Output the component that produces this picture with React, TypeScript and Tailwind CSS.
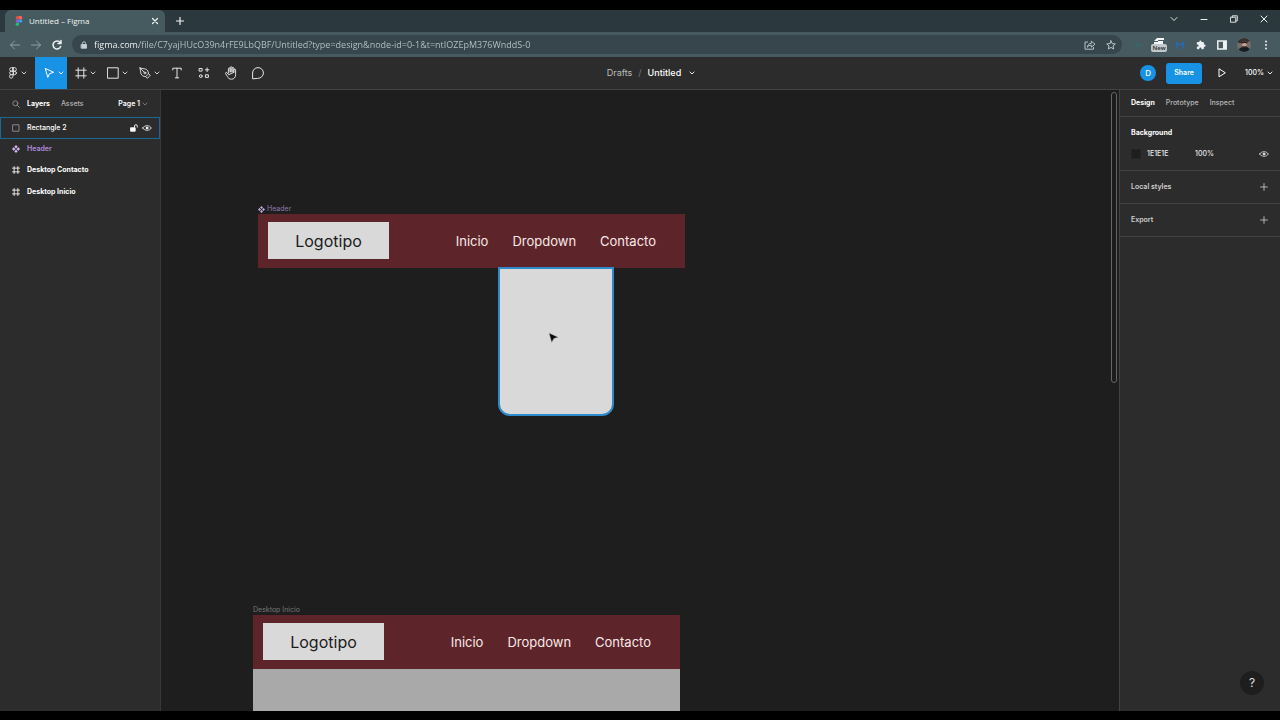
import type { ReactNode } from "react";

type IconProps = { className?: string };
type SvgProps = IconProps & { box?: string; sw?: number; children: ReactNode };

function Svg({ className = "size-4", box = "0 0 16 16", sw = 1, children }: SvgProps) {
  return (
    <svg
      className={`shrink-0 ${className}`}
      viewBox={box}
      fill="none"
      stroke="currentColor"
      strokeWidth={sw}
      strokeLinecap="round"
      strokeLinejoin="round"
      aria-hidden="true"
    >
      {children}
    </svg>
  );
}

function Chevron({ className = "h-1 w-1.5" }: IconProps) {
  return (
    <Svg className={className} box="0 0 6 4" sw={0.9}>
      <path d="M1 1l2 2 2-2" />
    </Svg>
  );
}

function FigmaColorIcon() {
  return (
    <svg className="h-2.5 w-2 shrink-0" viewBox="0 0 8 12" aria-hidden="true">
      <path d="M2 0h2v4H2a2 2 0 010-4z" fill="#e0533a" />
      <path d="M4 0h2a2 2 0 010 4H4z" fill="#f0685c" />
      <path d="M2 4h2v4H2a2 2 0 010-4z" fill="#8d5bd6" />
      <circle cx="6" cy="6" r="2" fill="#2fa8e8" />
      <path d="M2 8h2v2a2 2 0 11-2-2z" fill="#20bd78" />
    </svg>
  );
}

function FigmaOutlineIcon() {
  return (
    <Svg className="h-3 w-2" box="0 0 8 12" sw={0.9}>
      <path d="M4 .7H2.4a1.75 1.75 0 000 3.5H4zM4 .7h1.6a1.75 1.75 0 010 3.5H4zM4 4.2H2.4a1.75 1.75 0 000 3.5H4zM4 7.7H2.4A1.75 1.75 0 104 9.5z" />
      <circle cx="5.7" cy="5.95" r="1.7" />
    </Svg>
  );
}

function MoveIcon() {
  return (
    <Svg className="size-3" box="0 0 12 12">
      <path d="M2.3 1.8l2.5 8.6 1.7-3.7 3.8-1.3z" />
    </Svg>
  );
}

function HashIcon({ className = "size-3" }: IconProps) {
  return (
    <Svg className={className} box="0 0 12 12">
      <path d="M3.2.8v10.4M8.8.8v10.4M.8 3.2h10.4M.8 8.8h10.4" />
    </Svg>
  );
}

function SquareIcon() {
  return (
    <Svg className="size-3" box="0 0 12 12">
      <rect x=".8" y=".8" width="10.4" height="10.4" />
    </Svg>
  );
}

function PenIcon() {
  return (
    <Svg className="size-3" box="0 0 12 12" sw={0.9}>
      <path d="M1 1l5.6 1.1c1.8.6 3 2.4 2.8 4.8L6.8 9.5C4.4 9.7 2.6 8.5 2 6.7L1 1zM1 1l4.3 4.3M9.7 6.8l1.6 1.5-3 3-1.5-1.6" />
      <circle cx="5.9" cy="5.9" r="1" />
    </Svg>
  );
}

function TextIcon() {
  return (
    <Svg className="size-3" box="0 0 12 12">
      <path d="M1.8 3V1.2h8.4V3M6 1.2v9.6M4.3 10.8h3.4" />
    </Svg>
  );
}

function ResourcesIcon() {
  return (
    <Svg className="size-3" box="0 0 12 12">
      <rect x="1.500" y="1.500" width="2.600" height="2.600" />
      <path d="M9.1 1v3.6M7.3 2.8h3.6" />
      <circle cx="2.8" cy="9.1" r="1.4" />
      <rect x="7.8" y="7.8" width="2.600" height="2.600" />
    </Svg>
  );
}

function HandIcon() {
  return (
    <Svg className="size-3.5" box="0 0 14 14" sw={0.95}>
      <path d="M4.4 7.2V2.8a.9.9 0 011.8 0V6M6.2 5.8V1.6a.9.9 0 011.8 0V6M8 5.8V2.3a.9.9 0 011.8 0v4M9.8 6V4a.9.9 0 011.8 0v4.7c0 2.7-1.6 4.5-4.1 4.5-2.1 0-3.2-.9-4.1-2.7L1.6 7.7c-.5-1.1.8-1.8 1.5-.9l1.3 1.6z" />
    </Svg>
  );
}

function CommentIcon() {
  return (
    <Svg className="size-3.5" box="0 0 14 14">
      <path d="M1.6 12.400V7A5.400 5.400 0 117 12.400z" />
    </Svg>
  );
}

function EyeIcon() {
  return (
    <Svg className="h-2 w-2.5" box="0 0 10 8" sw={0.8}>
      <path d="M.7 4C2.5.9 7.5.9 9.3 4 7.5 7.1 2.5 7.1.7 4z" />
      <circle cx="5" cy="4" r="1" fill="currentColor" />
    </Svg>
  );
}

function UnlockIcon() {
  return (
    <Svg className="size-2" box="0 0 8 8" sw={0.9}>
      <rect x=".8" y="3.8" width="4.4" height="3.4" fill="currentColor" />
      <path d="M4.5 3.5V2.1a1.4 1.4 0 012.800 0v1" />
    </Svg>
  );
}

function ComponentIcon({ className = "size-2" }: IconProps) {
  return (
    <svg className={`shrink-0 ${className}`} viewBox="0 0 8 8" fill="currentColor" aria-hidden="true">
      <path d="M4 0l1.700 1.700L4 3.400 2.300 1.700zM4 4.600l1.700 1.700L4 8 2.300 6.300zM1.700 2.300L3.400 4 1.700 5.700 0 4zM6.300 2.300L8 4 6.300 5.700 4.600 4z" />
    </svg>
  );
}

function PlusIcon() {
  return (
    <Svg className="size-2" box="0 0 8 8" sw={0.8}>
      <path d="M4 .6v6.800M.6 4h6.800" />
    </Svg>
  );
}

function TabStrip() {
  return (
    <div className="flex h-[22px] items-stretch bg-[#2b393e] text-[#f1f4f4]">
      <div className="ml-[5px] flex w-40 items-center rounded-t-md bg-[#465b60] pr-1.5 pl-[10px]">
        <FigmaColorIcon />
        <span className="ml-1.5 flex-1 font-['Open_Sans',sans-serif] text-[8px]">Untitled – Figma</span>
        <button aria-label="Close tab">
          <Svg className="size-2" box="0 0 8 8" sw={1.2}>
            <path d="M1.500 1.500l5 5M6.500 1.500l-5 5" />
          </Svg>
        </button>
      </div>
      <button aria-label="New tab" className="ml-[11px]">
        <Svg className="size-2" box="0 0 8 8" sw={1.2}>
          <path d="M4 .5v7M.5 4h7" />
        </Svg>
      </button>
      <div className="ml-auto flex items-center gap-[22px] pr-3 pb-1">
        <button aria-label="Search tabs">
          <Svg className="size-2" box="0 0 8 8" sw={0.9}>
            <path d="M1 2.500l3 3 3-3" />
          </Svg>
        </button>
        <button aria-label="Minimize">
          <Svg className="size-2" box="0 0 8 8">
            <path d="M1 4.500h6" />
          </Svg>
        </button>
        <button aria-label="Restore">
          <Svg className="size-2" box="0 0 8 8" sw={0.9}>
            <rect x=".8" y="2.2" width="5" height="5" />
            <path d="M2.300 2V.8h5v5H6" />
          </Svg>
        </button>
        <button aria-label="Close window">
          <Svg className="size-2" box="0 0 8 8">
            <path d="M1 1l6 6M7 1L1 7" />
          </Svg>
        </button>
      </div>
    </div>
  );
}

function AddressBar() {
  return (
    <div className="flex h-[25px] items-center bg-[#465a60] pl-[9px] text-[#eef2f2]">
      <div className="flex w-[63px] items-center gap-[9px]">
        <button aria-label="Back" className="text-[#91a1a5]">
          <Svg className="size-3" box="0 0 12 12">
            <path d="M10.500 6h-9M5.500 2l-4 4 4 4" />
          </Svg>
        </button>
        <button aria-label="Forward" className="text-[#91a1a5]">
          <Svg className="size-3" box="0 0 12 12">
            <path d="M1.500 6h9M6.500 2l4 4-4 4" />
          </Svg>
        </button>
        <button aria-label="Reload">
          <Svg className="size-3" box="0 0 12 12" sw={1.5}>
            <path d="M9.700 7.500A4 4 0 119.200 3.500M10 1.500v3H7" />
          </Svg>
        </button>
      </div>
      <div className="flex h-[19px] min-w-0 flex-1 items-center rounded-full bg-[#36464c] pr-1.5 pl-2 text-[#c5cfd2]">
        <Svg className="size-2" box="0 0 8 8" sw={0.9}>
          <rect x="1.5" y="3.5" width="5" height="3.7" fill="currentColor" />
          <path d="M2.500 3.500V2.200a1.500 1.500 0 013 0v1.300" />
        </Svg>
        <input
          aria-label="Address"
          className="ml-1.5 min-w-0 flex-1 bg-[linear-gradient(to_right,#ffffff_45px,#b9c6ca_45px)] bg-clip-text font-['Open_Sans',sans-serif] text-[9px] leading-4 text-transparent outline-none"
          defaultValue="figma.com/file/C7yajHUcO39n4rFE9LbQBF/Untitled?type=design&node-id=0-1&t=ntIOZEpM376WnddS-0"
        />
        <button aria-label="Share page">
          <Svg className="h-2.5 w-3" box="0 0 12 10" sw={0.9}>
            <path d="M3.500 2H1v7.200h8.500V7.500M3.500 6.800C3.800 4.600 5 3.400 7.300 3.300V1.200l3.700 3-3.700 3V5.200C5.600 5.200 4.500 5.700 3.500 6.800z" />
          </Svg>
        </button>
        <button aria-label="Bookmark" className="ml-2.5">
          <Svg className="size-2.5" box="0 0 12 12" sw={1.1}>
            <path d="M6 1l1.500 3.400 3.700.3-2.800 2.500.8 3.600L6 8.900l-3.200 1.900.8-3.600L.8 4.700l3.700-.3z" />
          </Svg>
        </button>
      </div>
      <div className="flex w-[158px] shrink-0 items-center pr-3 pl-[11px]">
        <button aria-label="Extension" className="text-[#356a6c]">
          <Svg className="size-2.5" box="0 0 10 10" sw={1.5}>
            <path d="M2 5h6M5 3v4" />
          </Svg>
        </button>
        <button aria-label="New extension" className="ml-2 flex w-4 flex-col items-center">
          <svg className="h-1.5 w-2.5" viewBox="0 0 10 6" aria-hidden="true">
            <path d="M3 0h7v2H4v1h5v3H0V4h4V3H0z" fill="#f4f7f7" />
          </svg>
          <span className="rounded-xs bg-[#c2c8ca] px-px font-['Open_Sans',sans-serif] text-[6px] leading-[8px] font-semibold text-[#20282b]">
            New
          </span>
        </button>
        <button aria-label="Mail extension" className="ml-2 text-[#2a68a8]">
          <Svg className="size-2.5" box="0 0 10 10" sw={1.8}>
            <path d="M2 8V2.500L5 5l3-2.500V8" />
          </Svg>
        </button>
        <button aria-label="Extensions" className="ml-[11px]">
          <svg className="size-2.5" viewBox="0 0 24 24" fill="currentColor" aria-hidden="true">
            <path d="M20.500 11H19V7a2 2 0 00-2-2h-4V3.500a2.500 2.500 0 00-5 0V5H4a2 2 0 00-2 2v3.800h1.500a2.700 2.700 0 010 5.400H2V20a2 2 0 002 2h3.800v-1.500a2.700 2.700 0 015.400 0V22H17a2 2 0 002-2v-4h1.500a2.500 2.500 0 000-5z" />
          </svg>
        </button>
        <button aria-label="Side panel" className="ml-[11px]">
          <svg className="size-2.5" viewBox="0 0 10 10" aria-hidden="true">
            <path d="M.8 1h8.400v8H.8z" fill="none" stroke="currentColor" strokeWidth="1.5" />
            <path d="M6 1h3v8H6z" fill="currentColor" />
          </svg>
        </button>
        <button aria-label="Profile" className="ml-[10px]">
          <svg className="size-3.5" viewBox="0 0 14 14" aria-hidden="true">
            <circle cx="7" cy="7" r="7" fill="#746c69" />
            <path d="M1.500 11.300a7 7 0 0011.300-.4L10 9H5z" fill="#171c22" />
            <path d="M1 3.500a7 7 0 0111.500-.7L10 5 1 5z" fill="#382e2d" />
            <ellipse cx="7.3" cy="6.5" rx="2.5" ry="3.3" fill="#c79d8b" />
            <path d="M4.600 6C4.200 2.500 10.400 2.200 9.900 6 9 4.500 6 4.500 4.600 6zM5 7.800c1.500 1 3.200 1 4.700 0C9.500 11 5.500 11 5 7.800z" fill="#241d1d" />
          </svg>
        </button>
        <button aria-label="Browser menu" className="ml-auto">
          <svg className="h-2.5 w-1" viewBox="0 0 4 10" fill="currentColor" aria-hidden="true">
            <circle cx="2" cy="1.5" r="1" />
            <circle cx="2" cy="5" r="1" />
            <circle cx="2" cy="8.5" r="1" />
          </svg>
        </button>
      </div>
    </div>
  );
}

const menuTools = [
  { label: "Move", icon: <MoveIcon />, active: true },
  { label: "Frame", icon: <HashIcon />, active: false },
  { label: "Rectangle", icon: <SquareIcon />, active: false },
  { label: "Pen", icon: <PenIcon />, active: false },
];

const plainTools = [
  { label: "Text", icon: <TextIcon /> },
  { label: "Resources", icon: <ResourcesIcon /> },
  { label: "Hand", icon: <HandIcon /> },
  { label: "Comment", icon: <CommentIcon /> },
];

function EditorToolbar() {
  return (
    <header className="grid h-[33px] grid-cols-[1fr_auto_1fr] border-b border-[#434343] bg-[#2c2c2c] text-[#e6e6e6]">
      <div className="flex">
        <button aria-label="Main menu" className="flex w-[35px] items-center gap-1 pl-[9px]">
          <FigmaOutlineIcon />
          <Chevron />
        </button>
        {menuTools.map((t) => (
          <button
            key={t.label}
            aria-label={t.label}
            className={`flex w-8 items-center gap-[3px] pl-2 ${t.active ? "bg-[#1792e5] text-white" : ""}`}
          >
            {t.icon}
            <Chevron />
          </button>
        ))}
        <div className="flex gap-[13px] pl-[7px]">
          {plainTools.map((t) => (
            <button key={t.label} aria-label={t.label} className="flex w-3.5 items-center justify-center">
              {t.icon}
            </button>
          ))}
        </div>
      </div>
      <div className="flex items-center pl-[22px] text-[9px] leading-[14px]">
        <a href="#drafts" className="text-[#bcbcbc]">
          Drafts
        </a>
        <span className="mx-1.5 text-[#777777]">/</span>
        <button className="flex items-center gap-2 font-medium text-white">
          Untitled
          <Chevron />
        </button>
      </div>
      <div className="flex items-center justify-end pr-[7px] text-white">
        <button aria-label="Account" className="size-4 rounded-full bg-[#1792e5] text-[8px] font-medium">
          D
        </button>
        <button className="ml-2.5 h-[21px] w-9 rounded-[3px] bg-[#1792e5] text-[7px] font-semibold">Share</button>
        <button aria-label="Present" className="ml-[15px]">
          <Svg className="size-2.5" box="0 0 10 10">
            <path d="M2 1.200v7.600L8 5z" />
          </Svg>
        </button>
        <button className="ml-[18px] flex items-center gap-[3px] text-[7px] leading-3 font-medium">
          100%
          <Chevron />
        </button>
      </div>
    </header>
  );
}

function LayersPanel() {
  return (
    <aside className="flex w-[161px] shrink-0 flex-col border-r border-[#383838] bg-[#2c2c2c] text-[7px] leading-3 text-white">
      <div className="flex h-[27px] items-center px-3">
        <button aria-label="Search layers" className="text-[#8f8f8f]">
          <Svg className="size-2" box="0 0 8 8" sw={0.9}>
            <circle cx="3.3" cy="3.3" r="2.5" />
            <path d="M5.200 5.200L7.500 7.500" />
          </Svg>
        </button>
        <button className="ml-[7px] font-bold">Layers</button>
        <button className="ml-[11px] font-medium text-[#b3b3b3]">Assets</button>
        <button className="ml-auto flex items-center gap-[2px] font-semibold">
          Page 1
          <span className="flex text-[#808080]">
            <Chevron />
          </span>
        </button>
      </div>
      <ul>
        <li className="flex h-[22px] items-center border border-[#1d6798] pr-[7px] pl-[11px] font-medium">
          <Svg className="size-2 text-[#929292]" box="0 0 8 8" sw={0.9}>
            <path d="M1 .8h6v6.400H1z" />
          </Svg>
          <button className="ml-[7px] flex-1 text-left">Rectangle 2</button>
          <button aria-label="Lock layer">
            <UnlockIcon />
          </button>
          <button aria-label="Toggle visibility" className="ml-1">
            <EyeIcon />
          </button>
        </li>
        <li className="flex h-5 items-center pl-3 font-semibold text-[#b28bdd]">
          <span className="text-[#d6b8f5]">
            <ComponentIcon />
          </span>
          <button className="ml-[7px]">Header</button>
        </li>
        {["Desktop Contacto", "Desktop Inicio"].map((name) => (
          <li key={name} className="flex h-[22px] items-center pl-3 font-bold">
            <HashIcon className="size-2 stroke-[1.3]" />
            <button className="ml-[7px]">{name}</button>
          </li>
        ))}
      </ul>
    </aside>
  );
}

function SiteHeader() {
  return (
    <div className="flex h-[54px] w-[427px] items-start bg-[#5d252a] pt-2 pr-[29px] pl-[10px]">
      <div className="flex h-[37px] w-[121px] items-center justify-center bg-[#d9d9d9] text-[16px] text-[#1c1c1c]">
        Logotipo
      </div>
      <nav className="ml-auto flex gap-6 text-[13px] leading-[39px] text-[#f8e9e9]">
        <a href="#inicio">Inicio</a>
        <a href="#dropdown">Dropdown</a>
        <a href="#contacto">Contacto</a>
      </nav>
    </div>
  );
}

function Canvas() {
  return (
    <main className="relative min-w-0 flex-1 overflow-hidden bg-[#1e1e1e]">
      <section className="absolute top-[114px] left-[97px]">
        <div className="flex h-[10px] items-center gap-0.5 text-[7px] leading-3 text-[#8f78ad]">
          <span className="text-[#c3abe0]">
            <ComponentIcon className="size-[7px]" />
          </span>
          Header
        </div>
        <SiteHeader />
      </section>
      <div className="absolute top-[177px] left-[337px] h-[149px] w-[116px] rounded-b-[12px] border-2 border-[#2d8bcb] bg-[#d9d9d9]" />
      <svg className="absolute top-[242px] left-[387px] size-3" viewBox="0 0 12 12" aria-hidden="true">
        <path d="M1 1l2.700 9.500 2.200-4 4.400-1.200z" fill="#090909" stroke="#bcbcbc" strokeWidth=".5" />
      </svg>
      <section className="absolute top-[515px] left-[92px]">
        <div className="flex h-[10px] items-center text-[7px] leading-3 text-[#777777]">Desktop Inicio</div>
        <SiteHeader />
        <div className="h-[120px] bg-[#a9a9a9]" />
      </section>
      <div className="absolute top-0.5 right-[2px] h-[291px] w-1.5 rounded-full border border-[#666666] bg-[#1b1b1b]" />
    </main>
  );
}

function DesignPanel() {
  return (
    <aside className="relative w-[161px] shrink-0 border-l border-[#434343] bg-[#2c2c2c] text-[7px] leading-3 text-[#e8e8e8]">
      <div className="flex h-[27px] items-center gap-[11px] border-b border-[#434343] pl-[11px] font-medium text-[#b8b8b8]">
        <button className="font-bold text-white">Design</button>
        <button>Prototype</button>
        <button>Inspect</button>
      </div>
      <section className="h-[54px] border-b border-[#434343] px-[11px] pt-[5px]">
        <h2 className="flex h-[22px] items-center font-bold text-white">Background</h2>
        <div className="flex h-5 items-center">
          <button aria-label="Background swatch" className="size-2.5 border border-[#252525] bg-[#1e1e1e]" />
          <input
            aria-label="Background color"
            className="ml-1.5 w-12 bg-transparent font-medium outline-none"
            defaultValue="1E1E1E"
          />
          <input
            aria-label="Background opacity"
            className="w-8 bg-transparent font-medium outline-none"
            defaultValue="100%"
          />
          <button aria-label="Toggle background" className="ml-auto">
            <EyeIcon />
          </button>
        </div>
      </section>
      {["Local styles", "Export"].map((name) => (
        <section
          key={name}
          className="flex h-[33px] items-center justify-between border-b border-[#434343] pr-3 pl-[11px] font-semibold text-[#d0d0d0]"
        >
          <h2>{name}</h2>
          <button aria-label={`Add ${name}`}>
            <PlusIcon />
          </button>
        </section>
      ))}
      <button
        aria-label="Help"
        className="absolute right-4 bottom-4 size-6 rounded-full bg-[#1e1e1e] text-[12px] text-[#dedede]"
      >
        ?
      </button>
    </aside>
  );
}

export default function App() {
  return (
    <div className="flex h-screen flex-col bg-black pt-[10px] pb-[9px] font-['Inter',sans-serif]">
      <TabStrip />
      <AddressBar />
      <EditorToolbar />
      <div className="flex min-h-0 flex-1">
        <LayersPanel />
        <Canvas />
        <DesignPanel />
      </div>
    </div>
  );
}
